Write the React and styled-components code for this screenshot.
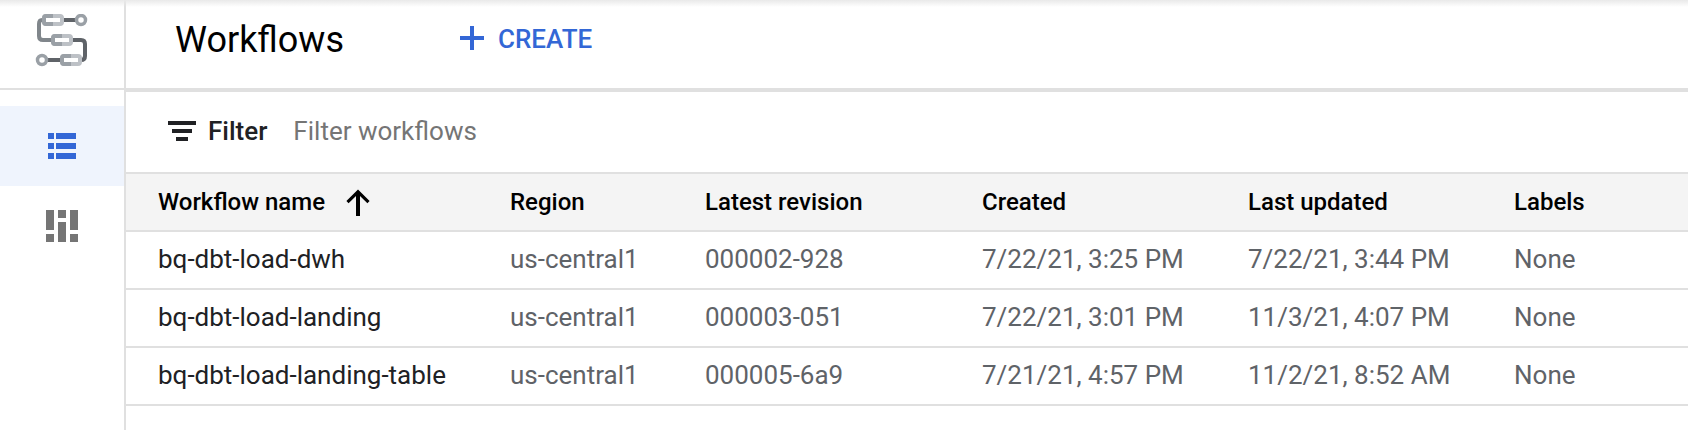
import React from 'react'
import styled, {createGlobalStyle} from 'styled-components'

const rows = [
    {name: 'bq-dbt-load-dwh', region: 'us-central1', revision: '000002-928', created: '7/22/21, 3:25 PM', updated: '7/22/21, 3:44 PM', labels: 'None'},
    {name: 'bq-dbt-load-landing', region: 'us-central1', revision: '000003-051', created: '7/22/21, 3:01 PM', updated: '11/3/21, 4:07 PM', labels: 'None'},
    {name: 'bq-dbt-load-landing-table', region: 'us-central1', revision: '000005-6a9', created: '7/21/21, 4:57 PM', updated: '11/2/21, 8:52 AM', labels: 'None'},
]

// two tone link of the workflow logo
const Pill = ({x, y}) => (
    <>
        <rect x={x} y={y} width="18" height="8" rx="2" fill="#fff" stroke="#bdc1c6" strokeWidth="4" />
        <path d={`M${x + 9} ${y}H${x + 2}Q${x} ${y} ${x} ${y + 2}V${y + 6}Q${x} ${y + 8} ${x + 2} ${y + 8}H${x + 9}`} stroke="#9aa0a6" strokeWidth="4" />
    </>
)

const Logo = () => (
    <svg width="60" height="60" viewBox="32 14 60 60" fill="none">
        <path d="M44 20H42Q39 20 39 24V36Q39 40 43 40H52" stroke="#80868b" strokeWidth="4" />
        <path d="M72 40H81Q85 40 85 44V56Q85 60 81 60H80" stroke="#5f6368" strokeWidth="4" />
        <path d="M62 20H76M47 60H61" stroke="#5f6368" strokeWidth="4" />
        <circle cx="81" cy="20" r="4.5" fill="#fff" stroke="#9aa0a6" strokeWidth="3.5" />
        <circle cx="42" cy="60" r="4.5" fill="#fff" stroke="#9aa0a6" strokeWidth="3.5" />
        <Pill x={44} y={16} />
        <Pill x={53} y={36} />
        <Pill x={62} y={56} />
    </svg>
)

const ListIcon = () => (
    <svg width="28" height="26" viewBox="0 0 28 26" fill="#3367d6">
        <path d="M0 0h6v6H0zM8 0h20v6H8zM0 10h6v6H0zM8 10h20v6H8zM0 20h6v6H0zM8 20h20v6H8z" />
    </svg>
)

const DashboardIcon = () => (
    <svg width="32" height="32" viewBox="0 0 32 32" fill="#757575">
        <path d="M0 0h8v20H0zM0 24h8v8H0zM12 0h8v8h-8zM12 12h8v20h-8zM24 0h8v20h-8zM24 24h8v8h-8z" />
    </svg>
)

const PlusIcon = () => (
    <svg width="24" height="24" viewBox="0 0 24 24" fill="#3367d6">
        <path d="M10 0h4v10h10v4H14v10h-4V14H0v-4h10z" />
    </svg>
)

const FilterIcon = () => (
    <svg width="28" height="20" viewBox="0 0 28 20" fill="#202124">
        <path d="M0 0h28v4H0zM4 8h20v4H4zM8 16h12v4H8z" />
    </svg>
)

const SortIcon = () => (
    <svg width="24" height="27" viewBox="0 0 24 27" fill="#000">
        <path d="M10 27V7L2.6 14.2 0.4 12 12 0.4 23.6 12l-2.2 2.2L14 7V27z" />
    </svg>
)

export default function App() {
    return (
        <Page>
            <GlobalStyle />
            <TopShadow />
            <Sidebar>
                <LogoCell><Logo /></LogoCell>
                <NavList>
                    <NavItem $active><ListIcon /></NavItem>
                    <NavItem><DashboardIcon /></NavItem>
                </NavList>
            </Sidebar>
            <Main>
                <Toolbar>
                    <Title>Workflows</Title>
                    <CreateButton><PlusIcon /><CreateLabel>CREATE</CreateLabel></CreateButton>
                </Toolbar>
                <FilterBar>
                    <FilterIcon />
                    <FilterLabel>Filter</FilterLabel>
                    <FilterHint>Filter workflows</FilterHint>
                </FilterBar>
                <HeadRow>
                    <HeadCell>Workflow name <SortIcon /></HeadCell>
                    <HeadCell>Region</HeadCell>
                    <HeadCell>Latest revision</HeadCell>
                    <HeadCell>Created</HeadCell>
                    <HeadCell>Last updated</HeadCell>
                    <HeadCell>Labels</HeadCell>
                </HeadRow>
                {rows.map((row) => (
                    <Row key={row.name}>
                        <NameCell>{row.name}</NameCell>
                        <Cell>{row.region}</Cell>
                        <Cell>{row.revision}</Cell>
                        <Cell>{row.created}</Cell>
                        <Cell>{row.updated}</Cell>
                        <Cell>{row.labels}</Cell>
                    </Row>
                ))}
            </Main>
        </Page>
    )
}

const GlobalStyle = createGlobalStyle`
    html, body {
        margin: 0;
        background: #fff;
        overflow: hidden;
    }
    * {
        box-sizing: border-box;
    }
`

const Page = styled.div`
    position: relative;
    display: flex;
    height: 430px;
    font-family: Roboto, "Liberation Sans", sans-serif;
`

const TopShadow = styled.div`
    position: absolute;
    top: 0;
    left: 0;
    right: 0;
    height: 7px;
    background: linear-gradient(#e9e9e9, rgba(255, 255, 255, 0));
`

const Sidebar = styled.div`
    width: 126px;
    flex-shrink: 0;
    border-right: 2px solid #e0e0e0;
`

const LogoCell = styled.div`
    height: 90px;
    display: flex;
    align-items: center;
    justify-content: center;
    border-bottom: 2px solid #e0e0e0;
`

const NavList = styled.div`
    padding-top: 16px;
`

const NavItem = styled.div`
    height: 80px;
    display: flex;
    align-items: center;
    justify-content: center;
    background: ${(p) => (p.$active ? '#eff4fd' : 'transparent')};
`

const Main = styled.div`
    flex: 1;
    min-width: 0;
`

const Toolbar = styled.div`
    height: 92px;
    display: flex;
    align-items: center;
    padding: 0 0 12px 49px;
    border-bottom: 4px solid #e0e0e0;
`

const Title = styled.h1`
    margin: 0;
    width: 285px;
    padding-top: 4px;
    font-size: 36px;
    font-weight: 400;
    color: #000;
`

const CreateButton = styled.div`
    display: flex;
    align-items: center;
    gap: 14px;
`

const CreateLabel = styled.span`
    padding-top: 2px;
    font-size: 26px;
    font-weight: 500;
    color: #3367d6;
`

const FilterBar = styled.div`
    height: 80px;
    display: flex;
    align-items: center;
    padding: 0 0 2px 42px;
`

const FilterLabel = styled.span`
    margin-left: 12px;
    font-size: 26px;
    font-weight: 500;
    color: #202124;
`

const FilterHint = styled.span`
    margin-left: 26px;
    font-size: 26px;
    color: #757575;
`

const columns = '352px 195px 277px 266px 266px 1fr'

const HeadRow = styled.div`
    height: 60px;
    display: grid;
    grid-template-columns: ${columns};
    align-items: center;
    padding-left: 32px;
    background: #f4f4f4;
    border-top: 2px solid #e0e0e0;
    border-bottom: 2px solid #e0e0e0;
`

const HeadCell = styled.div`
    display: flex;
    align-items: center;
    gap: 15px;
    font-size: 24px;
    font-weight: 500;
    color: #000;
    white-space: pre;
`

const Row = styled.div`
    height: 58px;
    display: grid;
    grid-template-columns: ${columns};
    align-items: center;
    padding: 0 0 2px 32px;
    border-bottom: 2px solid #e0e0e0;
`

const Cell = styled.div`
    font-size: 26px;
    color: #5f6368;
    white-space: nowrap;
`

const NameCell = styled(Cell)`
    color: #202124;
`
